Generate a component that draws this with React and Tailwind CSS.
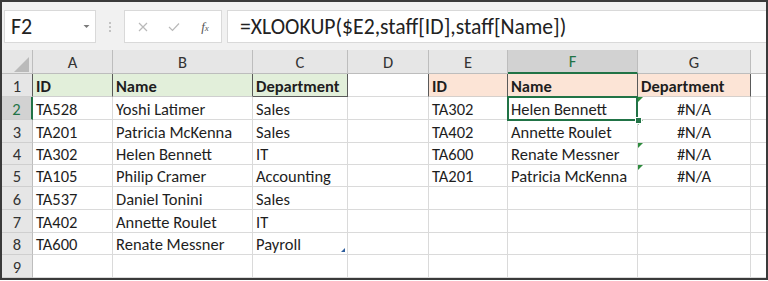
import React from "react";

const FONT = { fontFamily: "Carlito, Calibri, Lato, 'Open Sans', sans-serif" };

const COLW = [
  "w-[80px]",
  "w-[140px]",
  "w-[95px]",
  "w-[81px]",
  "w-[79px]",
  "w-[130px]",
  "w-[113px]",
];
const LETTERS = ["A", "B", "C", "D", "E", "F", "G"];
const ROWH = [
  "h-[23px]",
  "h-[23px]",
  "h-[23px]",
  "h-[22px]",
  "h-[22px]",
  "h-[23px]",
  "h-[23px]",
  "h-[22px]",
  "h-[23px]",
];

const DATA = [
  ["ID", "Name", "Department", "", "ID", "Name", "Department"],
  ["TA528", "Yoshi Latimer", "Sales", "", "TA302", "Helen Bennett", "#N/A"],
  ["TA201", "Patricia McKenna", "Sales", "", "TA402", "Annette Roulet", "#N/A"],
  ["TA302", "Helen Bennett", "IT", "", "TA600", "Renate Messner", "#N/A"],
  ["TA105", "Philip Cramer", "Accounting", "", "TA201", "Patricia McKenna", "#N/A"],
  ["TA537", "Daniel Tonini", "Sales", "", "", "", ""],
  ["TA402", "Annette Roulet", "IT", "", "", "", ""],
  ["TA600", "Renate Messner", "Payroll", "", "", "", ""],
  ["", "", "", "", "", "", ""],
];

function ErrTri() {
  return (
    <div className="absolute left-0 top-0 w-0 h-0 border-t-[5px] border-t-[#2e8b3e] border-r-[5px] border-r-transparent" />
  );
}

function Cell({ r, c, text }) {
  const header = r === 0;
  let bg = "bg-white";
  let border = "border-r border-b border-r-[#dadada] border-b-[#dadada]";
  if (header && c <= 2) {
    bg = "bg-[#e2efda]";
    border =
      c === 2
        ? "border-r border-b border-r-[#5a5a5a] border-b-[#5a5a5a]"
        : "border-r border-b border-r-[#5a5a5a] border-b-[#cfcfcf]";
  } else if (header && c === 3) {
    border = "border-r border-b border-r-[#5a5a5a] border-b-[#dadada]";
  } else if (header && c >= 4) {
    bg = "bg-[#fce4d6]";
    border = "border-r border-b border-r-[#5a5a5a] border-b-[#d6d0cc]";
  }
  const center = c === 6 && !header;
  return (
    <div
      className={`relative shrink-0 ${COLW[c]} ${bg} ${border} flex items-end ${
        center ? "justify-center" : "justify-start"
      } px-[3px] pb-[2px] text-[16.5px] leading-none text-[#1e1e1e] whitespace-nowrap ${
        header ? "font-bold" : ""
      }`}
    >
      {text}
      {c === 6 && r >= 1 && r <= 4 && <ErrTri />}
      {r === 1 && c === 5 && (
        <>
          <div className="absolute -left-[1px] -top-[1px] w-[131px] h-[25px] border-2 border-[#217346] z-10" />
          <div className="absolute left-[127px] top-[20px] w-[7px] h-[7px] bg-[#217346] border border-white z-20" />
        </>
      )}
      {r === 7 && c === 2 && (
        <div className="absolute right-[2px] bottom-[2px] w-0 h-0 border-b-[4px] border-b-[#2f5f9e] border-l-[4px] border-l-transparent" />
      )}
    </div>
  );
}

export default function App() {
  return (
    <div className="w-[768px] h-[281px] bg-white" style={FONT}>
      <div className="w-[768px] h-[280px] border-2 border-[#3a3a3a] flex flex-col overflow-hidden">
        {/* Formula bar */}
        <div className="h-[48px] shrink-0 bg-[#f1f1f1] flex items-start pt-[8px] pl-[2px]">
          <div className="w-[92px] h-[33px] bg-white border border-[#d9d9d9] flex items-center pl-[6px] pr-[6px] justify-between">
            <span className="text-[22px] leading-none text-[#222] pt-[1px]">F2</span>
            <svg width="7" height="5" viewBox="0 0 7 5" className="mr-[-1px]">
              <path d="M0.5 1 L6.5 1 L3.5 4 Z" fill="#7a7a7a" />
            </svg>
          </div>
          <div className="w-[28px] h-[33px] flex flex-col items-center justify-center gap-[2px]">
            <div className="w-[2px] h-[2px] bg-[#b3b3b3] rounded-full" />
            <div className="w-[2px] h-[2px] bg-[#b3b3b3] rounded-full" />
            <div className="w-[2px] h-[2px] bg-[#b3b3b3] rounded-full" />
          </div>
          <div className="w-[98px] h-[33px] bg-white border border-[#d9d9d9] flex items-center">
            <div className="w-[34px] flex justify-center pl-[1px]">
              <svg width="10" height="10" viewBox="0 0 10 10">
                <path d="M1 1 L9 9 M9 1 L1 9" stroke="#b9b9b9" strokeWidth="1.2" />
              </svg>
            </div>
            <div className="w-[30px] flex justify-center">
              <svg width="12" height="10" viewBox="0 0 12 10">
                <path d="M1 5 L4.5 8.5 L11 1.5" stroke="#b9b9b9" strokeWidth="1.2" fill="none" />
              </svg>
            </div>
            <div className="w-[32px] flex justify-center">
              <span
                className="italic text-[13px] leading-none text-[#555]"
                style={{ fontFamily: "'Liberation Serif', serif" }}
              >
                f<span className="text-[9px]">x</span>
              </span>
            </div>
          </div>
          <div className="ml-[5px] flex-1 h-[33px] bg-white border border-[#d9d9d9] border-r-0 flex items-center pl-[12px]">
            <span className="text-[21.7px] leading-none text-[#222] pt-[1px]">
              =XLOOKUP($E2,staff[ID],staff[Name])
            </span>
          </div>
        </div>

        {/* Column headers */}
        <div className="h-[24px] shrink-0 flex bg-[#f1f1f1]">
          <div className="w-[31px] shrink-0 bg-[#e6e6e6] border-r border-b border-[#bdbdbd] flex items-end justify-end pr-[3px] pb-[1px]">
            <div className="w-0 h-0 border-b-[15px] border-b-[#bababa] border-l-[15px] border-l-transparent" />
          </div>
          {LETTERS.map((l, i) =>
            l === "F" ? (
              <div
                key={l}
                className={`${COLW[i]} shrink-0 bg-[#d2d2d2] border-r border-r-[#bdbdbd] border-b-2 border-b-[#217346] flex items-center justify-center text-[16.5px] leading-none text-[#217346] pt-[1px]`}
              >
                {l}
              </div>
            ) : (
              <div
                key={l}
                className={`${COLW[i]} shrink-0 bg-[#e6e6e6] border-r border-b border-[#bdbdbd] flex items-center justify-center text-[16.5px] leading-none text-[#333] pt-[1px]`}
              >
                {l}
              </div>
            )
          )}
          <div className="flex-1 border-b border-[#bdbdbd]" />
        </div>

        {/* Rows */}
        {DATA.map((row, r) => (
          <div key={r} className={`${ROWH[r]} shrink-0 flex`}>
            {r === 1 ? (
              <div className="w-[31px] shrink-0 bg-[#d2d2d2] border-r-2 border-r-[#217346] border-b border-b-[#cfcfcf] flex items-end justify-center pb-[2px] text-[16.5px] leading-none text-[#217346]">
                {r + 1}
              </div>
            ) : (
              <div
                className={`w-[31px] shrink-0 bg-[#e6e6e6] border-r ${
                  r === 0 ? "border-r-[#5a5a5a]" : "border-r-[#bdbdbd]"
                } border-b border-b-[#cfcfcf] flex items-end justify-center pb-[2px] text-[16.5px] leading-none text-[#333]`}
              >
                {r + 1}
              </div>
            )}
            {row.map((t, c) => (
              <Cell key={c} r={r} c={c} text={t} />
            ))}
            <div className="flex-1 border-b border-[#dadada] bg-white" />
          </div>
        ))}
      </div>
    </div>
  );
}
